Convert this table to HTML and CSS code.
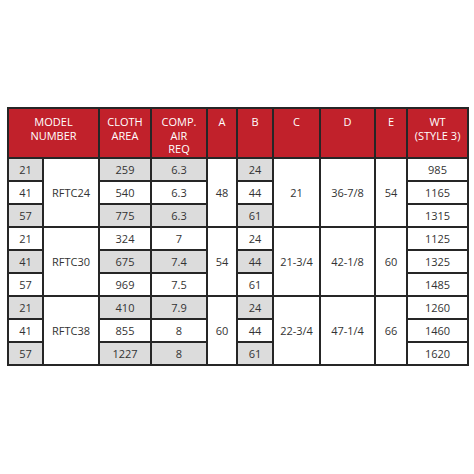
FILE: index.html
```html
<!DOCTYPE html>
<html>
<head>
<meta charset="utf-8">
<link rel="stylesheet" href="styles.css">
</head>
<body>
<div class="page">
<table class="spec">
<colgroup>
<col class="c1"><col class="c2"><col class="c3"><col class="c4"><col class="c5"><col class="c6"><col class="c7"><col class="c8"><col class="c9"><col class="c10">
</colgroup>
<thead>
<tr>
<th colspan="2">MODEL<br>NUMBER</th>
<th>CLOTH<br>AREA</th>
<th>COMP.<br>AIR<br>REQ</th>
<th>A</th>
<th>B</th>
<th>C</th>
<th>D</th>
<th>E</th>
<th>WT<br>(STYLE 3)</th>
</tr>
</thead>
<tbody>
<tr>
<td class="g">21</td><td rowspan="3">RFTC24</td><td class="g">259</td><td class="g">6.3</td><td rowspan="3">48</td><td class="g">24</td><td rowspan="3">21</td><td rowspan="3">36-7/8</td><td rowspan="3">54</td><td>985</td>
</tr>
<tr>
<td>41</td><td>540</td><td>6.3</td><td>44</td><td>1165</td>
</tr>
<tr>
<td class="g">57</td><td class="g">775</td><td class="g">6.3</td><td class="g">61</td><td>1315</td>
</tr>
<tr>
<td>21</td><td rowspan="3">RFTC30</td><td>324</td><td>7</td><td rowspan="3">54</td><td>24</td><td rowspan="3">21-3/4</td><td rowspan="3">42-1/8</td><td rowspan="3">60</td><td>1125</td>
</tr>
<tr>
<td class="g">41</td><td class="g">675</td><td class="g">7.4</td><td class="g">44</td><td>1325</td>
</tr>
<tr>
<td>57</td><td>969</td><td>7.5</td><td>61</td><td>1485</td>
</tr>
<tr>
<td class="g">21</td><td rowspan="3">RFTC38</td><td class="g">410</td><td class="g">7.9</td><td rowspan="3">60</td><td class="g">24</td><td rowspan="3">22-3/4</td><td rowspan="3">47-1/4</td><td rowspan="3">66</td><td>1260</td>
</tr>
<tr>
<td>41</td><td>855</td><td>8</td><td>44</td><td>1460</td>
</tr>
<tr>
<td class="g">57</td><td class="g">1227</td><td class="g">8</td><td class="g">61</td><td>1620</td>
</tr>
</tbody>
</table>
</div>
</body>
</html>
```
FILE: styles.css
```css
html, body {
  margin: 0;
  padding: 0;
  background: #ffffff;
}
.page {
  padding: 107px 0 0 7px;
}
.spec {
  border-collapse: collapse;
  table-layout: fixed;
  width: 460px;
  font-family: "Open Sans", "Liberation Sans", sans-serif;
  font-size: 11px;
  color: #333333;
}
.c1 { width: 35px; }
.c2 { width: 56px; }
.c3 { width: 52px; }
.c4 { width: 56px; }
.c5 { width: 30px; }
.c6 { width: 36px; }
.c7 { width: 47px; }
.c8 { width: 55px; }
.c9 { width: 32px; }
.c10 { width: 61px; }
.spec th, .spec td {
  border: 2px solid #262626;
  text-align: center;
  padding: 0;
}
.spec th {
  background: #c1212b;
  color: #ffffff;
  font-weight: 400;
  vertical-align: top;
  line-height: 13.5px;
  padding-top: 6px;
  height: 42px;
}
.spec td {
  height: 21px;
  vertical-align: middle;
  line-height: 14px;
  background: #ffffff;
}
.spec td.g {
  background: #dcdcdc;
}
```
